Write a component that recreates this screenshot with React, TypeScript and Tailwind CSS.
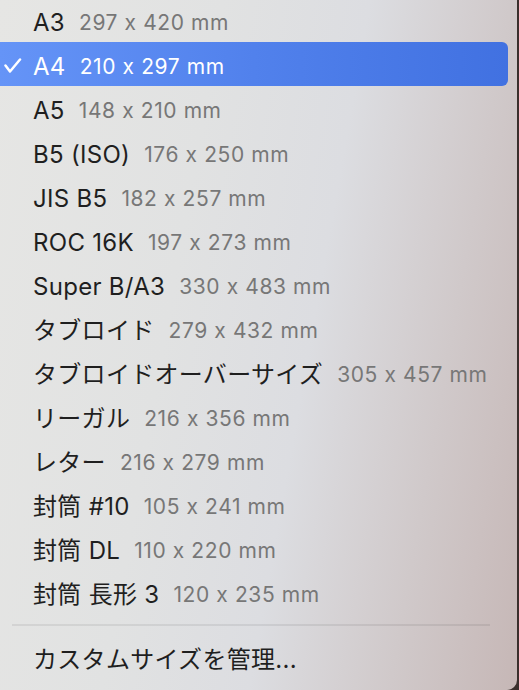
import * as React from "react";

type Size = { label: string; dims: string; selected?: boolean };

const sizes: Size[] = [
  { label: "A3", dims: "297 x 420 mm" },
  { label: "A4", dims: "210 x 297 mm", selected: true },
  { label: "A5", dims: "148 x 210 mm" },
  { label: "B5 (ISO)", dims: "176 x 250 mm" },
  { label: "JIS B5", dims: "182 x 257 mm" },
  { label: "ROC 16K", dims: "197 x 273 mm" },
  { label: "Super B/A3", dims: "330 x 483 mm" },
  { label: "タブロイド", dims: "279 x 432 mm" },
  { label: "タブロイドオーバーサイズ", dims: "305 x 457 mm" },
  { label: "リーガル", dims: "216 x 356 mm" },
  { label: "レター", dims: "216 x 279 mm" },
  { label: "封筒 #10", dims: "105 x 241 mm" },
  { label: "封筒 DL", dims: "110 x 220 mm" },
  { label: "封筒 長形 3", dims: "120 x 235 mm" },
];

function Check() {
  return (
    <svg width="18" height="16" viewBox="0 0 18 16" className="absolute left-[4px] top-[16px]">
      <path d="M1.5 7.5 L6 13.5 L16 1.5" fill="none" stroke="white" strokeWidth="2.5" strokeLinecap="round" strokeLinejoin="round" />
    </svg>
  );
}

function Row({ size }: { size: Size }) {
  return (
    <div
      className={`relative flex h-[44px] items-center gap-[14px] pl-[33px] pt-[5px] rounded-r-[6px] ${
        size.selected ? "bg-gradient-to-r from-[#6594f7] via-[#5181ec] to-[#4171e1]" : ""
      }`}
    >
      {size.selected && <Check />}
      <span className={`text-[24px] tracking-[0.3px] ${size.selected ? "text-white" : "text-[#1f1f1f]"}`}>
        {size.label}
      </span>
      <span className={`text-[21px] tracking-[0.6px] ${size.selected ? "text-white" : "text-[#777777]"}`}>
        {size.dims}
      </span>
    </div>
  );
}

export default function App() {
  return (
    <div className="flex h-[690px] w-[519px] bg-[#3a2f2c]" style={{ fontFamily: '"Inter", "Noto Sans CJK JP", sans-serif' }}>
      <div className="h-full w-[517px] overflow-hidden rounded-br-[10px] bg-[linear-gradient(100deg,#e6e6e4_0%,#e1e2e2_35%,#dcdde1_58%,#d0c9ca_80%,#c6b7b6_100%)]">
        <div className="-mt-[2px] pr-[9px]">
          {sizes.map((s) => (
            <Row key={s.label} size={s} />
          ))}
        </div>
        <div className="ml-[12px] mr-[27px] mt-[10px] h-[2px] bg-black/[0.07]" />
        <div className="mt-[12px] flex h-[44px] items-center pl-[33px] text-[24px] tracking-[0.3px] text-[#1f1f1f]">
          カスタムサイズを管理...
        </div>
      </div>
    </div>
  );
}
